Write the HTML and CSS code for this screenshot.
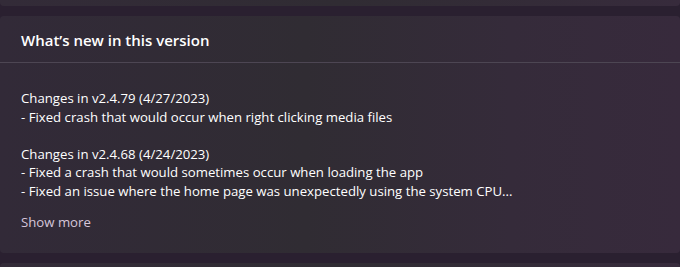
FILE: index.html
```html
<!DOCTYPE html>
<html>
<head>
<meta charset="utf-8">
<link rel="stylesheet" href="styles.css">
</head>
<body>
<div class="prev-card"></div>
<section class="card">
  <div class="card-header">What’s new in this version</div>
  <div class="card-body">
    <p class="notes">Changes in v2.4.79 (4/27/2023)<br>- Fixed crash that would occur when right clicking media files</p>
    <p class="notes">Changes in v2.4.68 (4/24/2023)<br>- Fixed a crash that would sometimes occur when loading the app<br>- Fixed an issue where the home page was unexpectedly using the system CPU...</p>
    <div class="show-more">Show more</div>
  </div>
</section>
<div class="next-card"></div>
</body>
</html>
```
FILE: styles.css
```css
html, body {
  margin: 0;
  padding: 0;
  height: 267px;
  overflow: hidden;
}
body {
  background: #2a2030;
  font-family: "Open Sans", "Noto Sans", sans-serif;
  color: #ffffff;
}
.prev-card {
  height: 6px;
  background: linear-gradient(90deg, #332b38 0%, #302c33 50%, #372b3c 100%);
  border-radius: 0 0 4px 4px;
}
.card {
  margin-top: 10px;
  height: 237px;
  background: linear-gradient(90deg, #322a38 0%, #302c33 45%, #352b3a 75%, #372a3c 100%);
  border-radius: 4px;
  box-sizing: border-box;
}
.card-header {
  height: 47px;
  box-sizing: border-box;
  padding: 14px 0 0 21px;
  font-size: 15px;
  font-weight: 600;
  border-bottom: 1px solid #4d4653;
}
.card-body {
  padding: 26px 0 0 21px;
}
.notes {
  margin: 0 0 18.6px 0;
  font-size: 13.2px;
  line-height: 18.6px;
}
.show-more {
  margin-top: -6px;
  font-size: 13.2px;
  line-height: 18.6px;
  color: #d6c6da;
}
.next-card {
  margin-top: 10px;
  height: 4px;
  background: linear-gradient(90deg, #332b38 0%, #302c33 50%, #372b3c 100%);
  border-radius: 4px 4px 0 0;
}
```
